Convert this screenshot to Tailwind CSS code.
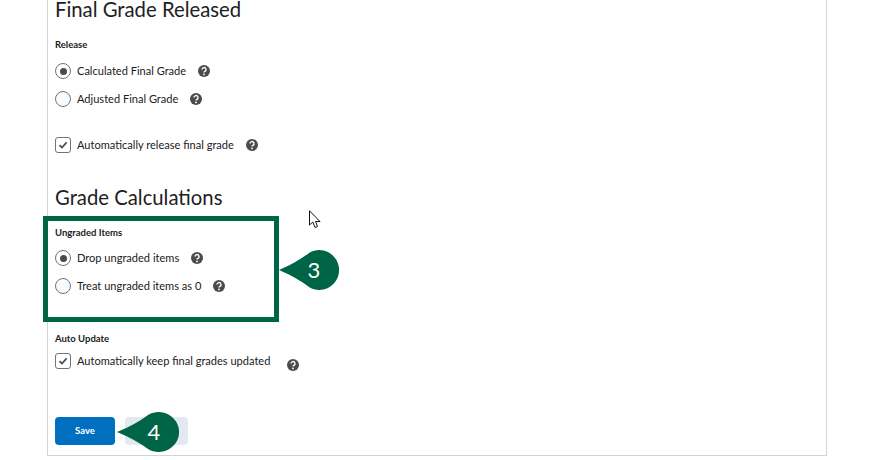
<!DOCTYPE html>
<html lang="en">
<head>
  <meta charset="UTF-8" />
  <title>Grade Settings</title>
  <script src="https://cdn.jsdelivr.net/npm/@tailwindcss/browser@4"></script>
</head>
<body class="bg-white text-[#202122] font-['Lato',sans-serif] overflow-hidden">

<div class="relative w-[876px] h-[460px] overflow-hidden">

  <!-- panel -->
  <main class="ml-[47px] w-[780px] h-[456px] border-x border-b border-[#cdd5dc] pl-[7px] box-border">

    <h2 class="h-[18px] text-[20.3px] leading-[18px] text-[#202122]">Final Grade Released</h2>

    <h3 class="mt-[21px] h-[12px] text-[9.5px] leading-[12px] font-bold">Release</h3>

    <div class="mt-[6px] h-[28px] flex items-center">
      <span class="w-[16px] h-[16px] rounded-full border border-[#6e7477] bg-white flex items-center justify-center"><span class="w-[7px] h-[7px] rounded-full bg-[#494c4e]"></span></span>
      <span class="ml-[6px] text-[11.05px]">Calculated Final Grade</span>
      <svg class="ml-[12px]" width="12" height="12" viewBox="0 0 12 12"><circle cx="6" cy="6" r="6" fill="#494c4e"/><path d="M4 4.6a2 2 0 1 1 3 1.700c-.7.4-1 .7-1 1.300" fill="none" stroke="#fff" stroke-width="1.4"/><circle cx="6" cy="9.400" r=".9" fill="#fff"/></svg>
    </div>
    <div class="h-[28px] flex items-center">
      <span class="w-[16px] h-[16px] rounded-full border border-[#6e7477] bg-[#f9fbff]"></span>
      <span class="ml-[6px] text-[11.05px]">Adjusted Final Grade</span>
      <svg class="ml-[12px]" width="12" height="12" viewBox="0 0 12 12"><circle cx="6" cy="6" r="6" fill="#494c4e"/><path d="M4 4.6a2 2 0 1 1 3 1.700c-.7.4-1 .7-1 1.300" fill="none" stroke="#fff" stroke-width="1.4"/><circle cx="6" cy="9.400" r=".9" fill="#fff"/></svg>
    </div>

    <div class="mt-[24px] h-[16px] flex items-center">
      <span class="w-[16px] h-[16px] rounded-[3px] border border-[#6e7477] flex items-center justify-center">
        <svg width="10" height="10" viewBox="0 0 10 10"><path d="M1.5 5.2 4 7.6 8.6 2.4" fill="none" stroke="#494c4e" stroke-width="1.7"/></svg>
      </span>
      <span class="ml-[6px] text-[11.05px]">Automatically release final grade</span>
      <svg class="ml-[12px]" width="12" height="12" viewBox="0 0 12 12"><circle cx="6" cy="6" r="6" fill="#494c4e"/><path d="M4 4.6a2 2 0 1 1 3 1.700c-.7.4-1 .7-1 1.300" fill="none" stroke="#fff" stroke-width="1.4"/><circle cx="6" cy="9.400" r=".9" fill="#fff"/></svg>
    </div>

    <h2 class="mt-[34px] h-[20px] text-[20.3px] leading-[20px]">Grade Calculations</h2>

    <h3 class="mt-[20px] h-[12px] text-[9.5px] leading-[12px] font-bold">Ungraded Items</h3>

    <div class="mt-[5px] h-[28px] flex items-center">
      <span class="w-[16px] h-[16px] rounded-full border border-[#6e7477] bg-white flex items-center justify-center"><span class="w-[7px] h-[7px] rounded-full bg-[#494c4e]"></span></span>
      <span class="ml-[6px] text-[11.05px]">Drop ungraded items</span>
      <svg class="ml-[12px]" width="12" height="12" viewBox="0 0 12 12"><circle cx="6" cy="6" r="6" fill="#494c4e"/><path d="M4 4.6a2 2 0 1 1 3 1.700c-.7.4-1 .7-1 1.300" fill="none" stroke="#fff" stroke-width="1.4"/><circle cx="6" cy="9.400" r=".9" fill="#fff"/></svg>
    </div>
    <div class="h-[28px] flex items-center">
      <span class="w-[16px] h-[16px] rounded-full border border-[#6e7477] bg-[#f9fbff]"></span>
      <span class="ml-[6px] text-[11.05px]">Treat ungraded items as 0</span>
      <svg class="ml-[12px]" width="12" height="12" viewBox="0 0 12 12"><circle cx="6" cy="6" r="6" fill="#494c4e"/><path d="M4 4.6a2 2 0 1 1 3 1.700c-.7.4-1 .7-1 1.300" fill="none" stroke="#fff" stroke-width="1.4"/><circle cx="6" cy="9.400" r=".9" fill="#fff"/></svg>
    </div>

    <h3 class="mt-[33px] h-[12px] text-[9.5px] leading-[12px] font-bold">Auto Update</h3>

    <div class="mt-[8px] h-[16px] flex items-center">
      <span class="w-[16px] h-[16px] rounded-[3px] border border-[#6e7477] flex items-center justify-center">
        <svg width="10" height="10" viewBox="0 0 10 10"><path d="M1.5 5.2 4 7.6 8.6 2.4" fill="none" stroke="#494c4e" stroke-width="1.7"/></svg>
      </span>
      <span class="ml-[6px] text-[11.05px]">Automatically keep final grades updated</span>
      <svg class="ml-[17px] mt-[7px]" width="12" height="12" viewBox="0 0 12 12"><circle cx="6" cy="6" r="6" fill="#494c4e"/><path d="M4 4.6a2 2 0 1 1 3 1.700c-.7.4-1 .7-1 1.300" fill="none" stroke="#fff" stroke-width="1.4"/><circle cx="6" cy="9.400" r=".9" fill="#fff"/></svg>
    </div>

    <div class="mt-[48px] flex gap-[10px]">
      <button class="w-[60px] h-[28px] rounded-[4px] bg-[#006fbf] text-white text-[9.5px] font-bold">Save</button>
      <span class="w-[63px] h-[28px] rounded-[4px] bg-[#e3e9f1]"></span>
    </div>
  </main>

  <!-- annotation: green box -->
  <div class="absolute left-[43px] top-[216px] w-[236px] h-[106px] border-[5px] border-[#006546]"></div>

  <!-- annotation: callout 3 -->
  <svg class="absolute left-[279px] top-[250px]" width="60" height="40" viewBox="0 0 62 41" preserveAspectRatio="none">
    <path d="M0 20.500Q18 13 31.400 2.700A20.500 20.500 0 1 1 31.400 38.300Q18 28 0 20.500Z" fill="#006546"/>
  </svg>
  <span class="absolute left-[304px] top-[257px] w-[20px] text-center text-white text-[22px] leading-[26px]">3</span>

  <!-- annotation: callout 4 -->
  <svg class="absolute left-[117px] top-[412px]" width="62" height="40" viewBox="0 0 62 41" preserveAspectRatio="none">
    <path d="M0 20.500Q18 13 31.400 2.700A20.500 20.500 0 1 1 31.400 38.300Q18 28 0 20.500Z" fill="#006546"/>
  </svg>
  <span class="absolute left-[144px] top-[419px] w-[20px] text-center text-white text-[22px] leading-[26px]">4</span>

  <!-- mouse cursor -->
  <svg class="absolute left-[309px] top-[210px]" width="12" height="19" viewBox="0 0 12 19">
    <path d="M.5.800V15L3.800 12 6 17.500 8.500 16.500 6.500 11.500H11Z" fill="#fff" stroke="#111" stroke-width="1"/>
  </svg>
</div>

</body>
</html>
